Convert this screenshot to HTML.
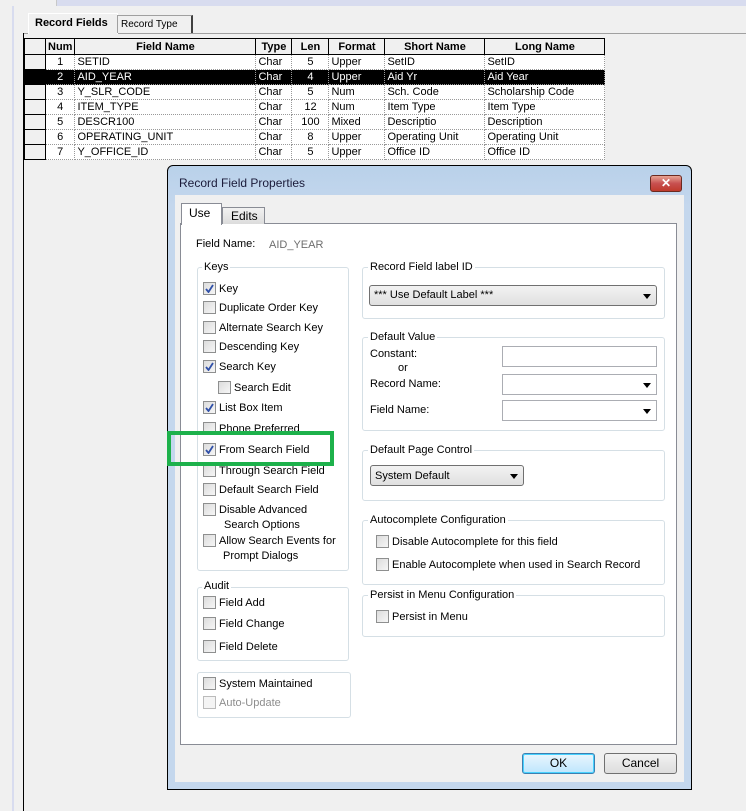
<!DOCTYPE html><html><head><style>
*{box-sizing:border-box;margin:0;padding:0}
body{width:746px;height:811px;background:#f0f0f0;position:relative;overflow:hidden;font-family:"Liberation Sans",sans-serif;font-size:11px;color:#000}
.a{position:absolute}
table{border-collapse:collapse;position:absolute;left:24px;top:38px;background:#fff}
td,th{height:15px;padding:0 2px;font-size:11px;white-space:nowrap;border-right:1px dotted #999;border-bottom:1px dotted #999;line-height:14px}
th{background:#f0f0f0;border:1px solid #000;font-weight:bold;height:16px}
td.s{background:#f0f0f0;border:1px solid #000;border-top:none}
tr.sel td{background:#000;color:#fff}
.cb{position:absolute;width:13px;height:13px;border:1px solid #8e8f8f;background:linear-gradient(135deg,#dcdcdc,#f6f6f6)}
.cb.c svg{position:absolute;left:1px;top:1px}
.cb.d{border-color:#bbb;background:#f4f4f4}
.t{position:absolute;white-space:nowrap;line-height:13px}
.g{position:absolute;border:1px solid #d5dfe5;border-radius:3px}
.gl{position:absolute;background:#fff;padding:0 2px;line-height:13px;white-space:nowrap}
.cm{position:absolute;border:1px solid #abadb3;background:#fff}
.ar{position:absolute;right:5px;top:50%;margin-top:-2px;border-left:4px solid transparent;border-right:4px solid transparent;border-top:5px solid #000}
</style></head><body>
<div class="a" style="left:57px;top:0;width:689px;height:6px;background:#d8dcef"></div>
<div class="a" style="left:0;top:0;width:57px;height:6px;border-right:1px solid #c8c8c8"></div>
<div class="a" style="left:12px;top:6px;width:2px;height:805px;background:#d8dcef"></div>
<div class="a" style="left:23px;top:33px;width:723px;height:1px;background:#a0a0a0"></div>
<div class="a" style="left:23px;top:33px;width:1px;height:778px;background:#000"></div>
<div class="a" style="left:28px;top:13px;width:90px;height:21px;background:#f0f0f0;border:1px solid #fff;border-bottom:none;font-weight:bold;padding:3px 0 0 6px">Record Fields</div>
<div class="a" style="left:117px;top:15px;width:76px;height:18px;border:1px solid #a0a0a0;border-right:2px solid #404040;border-bottom:none;font-size:10px;padding:3px 0 0 3px">Record Type</div>
<table>
<tr><th style="width:21px"></th><th style="width:28px">Num</th><th style="width:181px">Field Name</th><th style="width:36px">Type</th><th style="width:37px">Len</th><th style="width:56px">Format</th><th style="width:100px">Short Name</th><th style="width:120px">Long Name</th></tr>
<tr><td class="s"></td><td style="text-align:center">1</td><td>SETID</td><td>Char</td><td style="text-align:center">5</td><td>Upper</td><td>SetID</td><td>SetID</td></tr>
<tr class="sel"><td class="s" style="background:#000"></td><td style="text-align:center">2</td><td>AID_YEAR</td><td>Char</td><td style="text-align:center">4</td><td>Upper</td><td>Aid Yr</td><td>Aid Year</td></tr>
<tr><td class="s"></td><td style="text-align:center">3</td><td>Y_SLR_CODE</td><td>Char</td><td style="text-align:center">5</td><td>Num</td><td>Sch. Code</td><td>Scholarship Code</td></tr>
<tr><td class="s"></td><td style="text-align:center">4</td><td>ITEM_TYPE</td><td>Char</td><td style="text-align:center">12</td><td>Num</td><td>Item Type</td><td>Item Type</td></tr>
<tr><td class="s"></td><td style="text-align:center">5</td><td>DESCR100</td><td>Char</td><td style="text-align:center">100</td><td>Mixed</td><td>Descriptio</td><td>Description</td></tr>
<tr><td class="s"></td><td style="text-align:center">6</td><td>OPERATING_UNIT</td><td>Char</td><td style="text-align:center">8</td><td>Upper</td><td>Operating Unit</td><td>Operating Unit</td></tr>
<tr><td class="s"></td><td style="text-align:center">7</td><td>Y_OFFICE_ID</td><td>Char</td><td style="text-align:center">5</td><td>Upper</td><td>Office ID</td><td>Office ID</td></tr>
</table>
<div class="a" style="left:167px;top:165px;width:525px;height:625px;border:1px solid #000;border-radius:6px 6px 0 0;background:linear-gradient(#b9d1ea,#c4d7ed 40px,#c4d7ed)"></div>
<div class="t" style="left:179px;top:177px;font-size:12px;color:#1b1b3a">Record Field Properties</div>
<div class="a" style="left:650px;top:175px;width:32px;height:17px;border:1px solid #6b2a20;border-radius:3px;background:linear-gradient(#e8a493,#c75050 50%,#c03a2c);color:#fff;font-weight:bold;font-size:12px;text-align:center;line-height:15px">✕</div>
<div class="a" style="left:175px;top:195px;width:509px;height:587px;background:#f0f0f0"></div>
<div class="a" style="left:180px;top:223px;width:497px;height:522px;background:#fff;border:1px solid #898c95"></div>
<div class="a" style="left:181px;top:203px;width:41px;height:22px;background:#fff;border:1px solid #898c95;border-bottom:none;font-size:12px;padding:2px 0 0 7px">Use</div>
<div class="a" style="left:222px;top:207px;width:43px;height:17px;background:linear-gradient(#f2f2f2,#dcdcdc);border:1px solid #898c95;border-bottom:none;font-size:12px;padding:1px 0 0 8px">Edits</div>
<div class="t" style="left:196px;top:238px">Field Name:</div>
<div class="t" style="left:269px;top:239px;color:#6d6d6d">AID_YEAR</div>
<div class="g" style="left:197px;top:267px;width:152px;height:304px"></div><div class="gl" style="left:202px;top:261px">Keys</div>
<div class="g" style="left:197px;top:587px;width:152px;height:74px"></div><div class="gl" style="left:202px;top:580px">Audit</div>
<div class="g" style="left:197px;top:672px;width:154px;height:46px"></div>
<div class="cb c" style="left:203px;top:282px"><svg width="9" height="9"><path d="M1 5 L3.5 8 L8 1" stroke="#3050a8" stroke-width="1.8" fill="none"/></svg></div><div class="t" style="left:219px;top:283px">Key</div>
<div class="cb" style="left:203px;top:301px"></div><div class="t" style="left:219px;top:302px">Duplicate Order Key</div>
<div class="cb" style="left:203px;top:321px"></div><div class="t" style="left:219px;top:322px">Alternate Search Key</div>
<div class="cb" style="left:203px;top:340px"></div><div class="t" style="left:219px;top:341px">Descending Key</div>
<div class="cb c" style="left:203px;top:360px"><svg width="9" height="9"><path d="M1 5 L3.5 8 L8 1" stroke="#3050a8" stroke-width="1.8" fill="none"/></svg></div><div class="t" style="left:219px;top:361px">Search Key</div>
<div class="cb" style="left:218px;top:381px"></div><div class="t" style="left:234px;top:382px">Search Edit</div>
<div class="cb c" style="left:203px;top:401px"><svg width="9" height="9"><path d="M1 5 L3.5 8 L8 1" stroke="#3050a8" stroke-width="1.8" fill="none"/></svg></div><div class="t" style="left:219px;top:402px">List Box Item</div>
<div class="cb" style="left:203px;top:422px"></div><div class="t" style="left:219px;top:423px">Phone Preferred</div>
<div class="cb c" style="left:203px;top:443px"><svg width="9" height="9"><path d="M1 5 L3.5 8 L8 1" stroke="#3050a8" stroke-width="1.8" fill="none"/></svg></div><div class="t" style="left:219px;top:444px">From Search Field</div>
<div class="cb" style="left:203px;top:464px"></div><div class="t" style="left:219px;top:465px">Through Search Field</div>
<div class="cb" style="left:203px;top:483px"></div><div class="t" style="left:219px;top:484px">Default Search Field</div>
<div class="cb" style="left:203px;top:503px"></div><div class="t" style="left:219px;top:504px">Disable Advanced</div><div class="t" style="left:224px;top:519px">Search Options</div>
<div class="cb" style="left:203px;top:534px"></div><div class="t" style="left:219px;top:535px">Allow Search Events for</div><div class="t" style="left:223px;top:550px">Prompt Dialogs</div>
<div class="a" style="left:167px;top:431px;width:167px;height:35px;border:4px solid #1db14b"></div>
<div class="cb" style="left:203px;top:596px"></div><div class="t" style="left:219px;top:597px">Field Add</div>
<div class="cb" style="left:203px;top:617px"></div><div class="t" style="left:219px;top:618px">Field Change</div>
<div class="cb" style="left:203px;top:640px"></div><div class="t" style="left:219px;top:641px">Field Delete</div>
<div class="cb" style="left:203px;top:677px"></div><div class="t" style="left:219px;top:678px">System Maintained</div>
<div class="cb d" style="left:203px;top:696px"></div><div class="t" style="left:219px;top:697px;color:#8d8d8d">Auto-Update</div>
<div class="g" style="left:362px;top:267px;width:303px;height:52px"></div><div class="gl" style="left:368px;top:261px">Record Field label ID</div>
<div class="cm" style="left:369px;top:285px;width:288px;height:21px;border-color:#707070;border-radius:3px;background:linear-gradient(#f2f2f2,#e0e0e0)"><div class="t" style="left:4px;top:3px">*** Use Default Label ***</div><div class="ar"></div></div>
<div class="g" style="left:362px;top:337px;width:303px;height:94px"></div><div class="gl" style="left:368px;top:331px">Default Value</div>
<div class="t" style="left:370px;top:348px">Constant:</div><div class="t" style="left:398px;top:362px">or</div>
<div class="t" style="left:370px;top:378px">Record Name:</div><div class="t" style="left:370px;top:404px">Field Name:</div>
<div class="cm" style="left:502px;top:346px;width:155px;height:21px"></div>
<div class="cm" style="left:502px;top:374px;width:155px;height:21px"><div class="ar"></div></div>
<div class="cm" style="left:502px;top:400px;width:155px;height:21px"><div class="ar"></div></div>
<div class="g" style="left:362px;top:450px;width:303px;height:51px"></div><div class="gl" style="left:368px;top:444px">Default Page Control</div>
<div class="cm" style="left:370px;top:465px;width:154px;height:21px;border-color:#707070;border-radius:3px;background:linear-gradient(#f2f2f2,#e0e0e0)"><div class="t" style="left:4px;top:4px">System Default</div><div class="ar"></div></div>
<div class="g" style="left:362px;top:520px;width:303px;height:65px"></div><div class="gl" style="left:368px;top:514px">Autocomplete Configuration</div>
<div class="cb" style="left:376px;top:535px"></div><div class="t" style="left:392px;top:536px">Disable Autocomplete for this field</div>
<div class="cb" style="left:376px;top:558px"></div><div class="t" style="left:392px;top:559px">Enable Autocomplete when used in Search Record</div>
<div class="g" style="left:362px;top:595px;width:303px;height:42px"></div><div class="gl" style="left:368px;top:589px">Persist in Menu Configuration</div>
<div class="cb" style="left:376px;top:610px"></div><div class="t" style="left:392px;top:611px">Persist in Menu</div>
<div class="a" style="left:522px;top:753px;width:73px;height:21px;border:1px solid #3c7fb1;border-radius:3px;background:linear-gradient(#eaf6fd,#bee6fd);box-shadow:inset 0 0 0 1px #48d2ff;text-align:center;line-height:19px;font-size:12px">OK</div>
<div class="a" style="left:604px;top:753px;width:73px;height:21px;border:1px solid #707070;border-radius:3px;background:linear-gradient(#f2f2f2,#dddddd);text-align:center;line-height:19px;font-size:12px">Cancel</div>
</body></html>
